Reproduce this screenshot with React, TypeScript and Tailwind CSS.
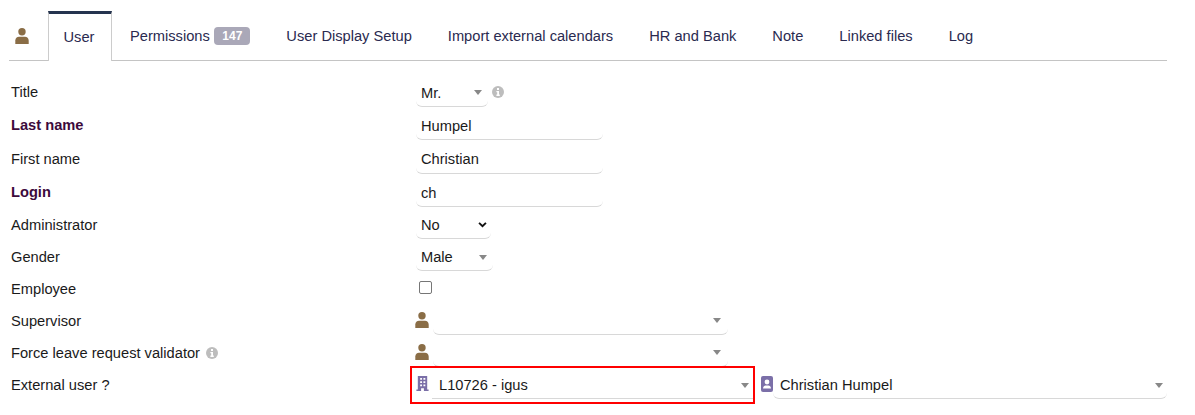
import type { ReactNode } from 'react';

const tabs = ['User Display Setup', 'Import external calendars', 'HR and Bank', 'Note', 'Linked files', 'Log'];

function PersonIcon({ className }: { className?: string }) {
  return (
    <svg viewBox="0 0 14 16" className={className} fill="#8a6d46">
      <circle cx="7" cy="3.8" r="3.7" />
      <path d="M0.3 16v-3.4C0.3 10.4 2 8.8 4 8.8h6c2 0 3.7 1.6 3.7 3.8V16z" />
    </svg>
  );
}

function InfoIcon() {
  return (
    <svg viewBox="0 0 12 12" className="w-3 h-3 shrink-0">
      <circle cx="6" cy="6" r="6" fill="#bdbdbd" />
      <rect x="5" y="2" width="2" height="2" fill="#fff" />
      <path d="M4.4 5h2.6v3.6h0.8V10H4.4V8.6h0.8V6.3h-0.8z" fill="#fff" />
    </svg>
  );
}

function Caret() {
  return <span className="w-0 h-0 border-x-[4px] border-x-transparent border-t-[5px] border-t-[#888]" />;
}

function Row({ label, bold, height, children }: { label: ReactNode; bold?: boolean; height: string; children: ReactNode }) {
  return (
    <div className={`flex ${height}`}>
      <div className={`w-[407px] pl-[2px] pt-[3px] flex items-center gap-[6px] ${bold ? 'font-bold text-[#3c0a3c]' : ''}`}>{label}</div>
      <div className="flex-1 flex items-stretch">{children}</div>
    </div>
  );
}

function TextValue({ value }: { value: string }) {
  return <div className="w-[187px] pl-[5px] pt-[5px] flex items-center border-b border-[#d8d8d8] rounded-b-md">{value}</div>;
}

function SelectValue({ value, width }: { value: string; width: string }) {
  return (
    <div className={`${width} pl-[5px] pr-[6px] pt-[5px] flex items-center justify-between border-b border-[#d8d8d8] rounded-b-md`}>
      <span>{value}</span>
      <Caret />
    </div>
  );
}

function UserSelect() {
  return (
    <div className="flex items-stretch">
      <PersonIcon className="w-[14px] h-[16px] mt-[9px] -ml-[1px]" />
      <div className="ml-[4px] w-[295px] pr-[7px] pt-[3px] flex items-center justify-end border-b border-[#d8d8d8] rounded-b-md">
        <Caret />
      </div>
    </div>
  );
}

export default function App() {
  return (
    <div className="w-[1195px] h-[415px] bg-white text-[14.67px] text-[#1a1a1a] overflow-hidden" style={{ fontFamily: '"Liberation Sans", Arial, sans-serif' }}>
      <div className="pt-[11px] ml-[9px] w-[1158px] h-[61px] flex items-stretch border-b border-[#c4c4c4] text-[#2a2a50]">
        <div className="w-[39px] flex items-center pl-[6px]">
          <PersonIcon className="w-[14px] h-[16px]" />
        </div>
        <div className="w-[64px] pb-[2px] pr-[2px] flex items-center justify-center border-x border-[#ccc] border-t-[3px] border-t-[#25344f] -mb-px bg-white">User</div>
        <div className="ml-[18px] flex items-center gap-[4.5px]">
          Permissions
          <span className="bg-[#aaa8b8] text-white text-[12px] font-bold rounded-[4px] px-[8px] h-[18px] flex items-center">147</span>
        </div>
        {tabs.map((t) => (
          <div key={t} className="ml-[36px] flex items-center">{t}</div>
        ))}
      </div>

      <div className="relative mt-[13px] ml-[9px]">
        <Row label="Title" height="h-[33px]">
          <SelectValue value="Mr." width="w-[72px]" />
          <div className="ml-[4px] mt-[12px]"><InfoIcon /></div>
        </Row>
        <Row label="Last name" bold height="h-[33px]"><TextValue value="Humpel" /></Row>
        <Row label="First name" height="h-[34px]"><TextValue value="Christian" /></Row>
        <Row label="Login" bold height="h-[33px]"><TextValue value="ch" /></Row>
        <Row label="Administrator" height="h-[32px]">
          <div className="w-[75px] pl-[5px] pr-[4px] pt-[5px] flex items-center justify-between border-b border-[#d8d8d8] rounded-b-md">
            <span>No</span>
            <svg viewBox="0 0 10 7" className="w-[9px] h-[6px]" fill="none" stroke="#111" strokeWidth="2.2"><path d="M1 1l4 4 4-4" /></svg>
          </div>
        </Row>
        <Row label="Gender" height="h-[32px]"><SelectValue value="Male" width="w-[77px]" /></Row>
        <Row label="Employee" height="h-[32px]">
          <div className="flex items-center pl-[3px]">
            <span className="w-[13px] h-[13px] border border-[#767676] rounded-[2px] bg-white" />
          </div>
        </Row>
        <Row label="Supervisor" height="h-[32px]"><UserSelect /></Row>
        <Row label={<>Force leave request validator <InfoIcon /></>} height="h-[32px]"><UserSelect /></Row>
        <Row label="External user ?" height="h-[32px]">
          <div className="flex items-stretch">
            <svg viewBox="0 0 13 16" className="w-[13px] h-[15px] mt-[9px] shrink-0">
              <path fill="#7b6fa8" d="M1.5 0h10v14.5h1.5V16H8v-3H5v3H0v-1.5h1.5z" />
              <path fill="#fff" d="M4 2h2v2H4zM7.5 2h2v2h-2zM4 5.5h2v2H4zM7.5 5.5h2v2h-2zM4 9h2v2H4zM7.5 9h2v2h-2z" />
            </svg>
            <div className="ml-[3px] w-[323px] pr-[6px] pt-[5px] flex items-center justify-between border-b border-[#d8d8d8]">
              <span className="pl-[7px]">L10726 - igus</span>
              <Caret />
            </div>
            <svg viewBox="0 0 12 16" className="ml-[6px] w-[12px] h-[16px] mt-[9px] shrink-0">
              <rect width="12" height="16" rx="2" fill="#7b6fa8" />
              <circle cx="6" cy="6" r="2.4" fill="#fff" />
              <path d="M2 12.5c0-2 1.5-3 2.5-3h3c1 0 2.5 1 2.5 3z" fill="#fff" />
            </svg>
            <div className="w-[394px] pl-[7px] pr-[4px] pt-[5px] flex items-center justify-between border-b border-[#d8d8d8] rounded-b-md">
              <span>Christian Humpel</span>
              <Caret />
            </div>
          </div>
        </Row>
        <div className="absolute left-[401px] top-[292px] w-[345px] h-[38px] border-2 border-[#ff0000] pointer-events-none" />
      </div>
    </div>
  );
}
